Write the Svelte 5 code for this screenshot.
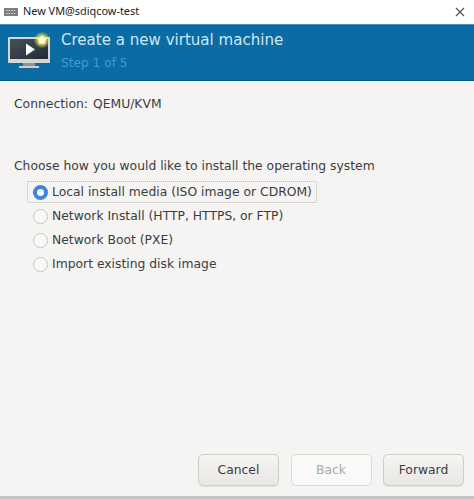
<script>
  let options = [
    "Local install media (ISO image or CDROM)",
    "Network Install (HTTP, HTTPS, or FTP)",
    "Network Boot (PXE)",
    "Import existing disk image",
  ];
  let selected = 0;
</script>

<div class="window">
  <div class="titlebar">
    <svg class="app-icon" width="14" height="8" viewBox="0 0 14 8">
      <rect x="0" y="0" width="14" height="8" fill="#7d7f81" />
      <path d="M2 2.500h10M2 5.500h10" stroke="#d4d4d4" stroke-width="1" stroke-dasharray="1.500 1" />
    </svg>
    <span class="title">New VM@sdiqcow-test</span>
    <svg class="close" width="10" height="10" viewBox="0 0 10 10">
      <path d="M1 1l8 8M9 1l-8 8" stroke="#555" stroke-width="1.200" fill="none" />
    </svg>
  </div>

  <header class="banner">
    <svg class="vm-icon" width="44" height="46" viewBox="0 0 44 46">
      <defs>
        <radialGradient id="glow">
          <stop offset="0.35" stop-color="#fff27a" />
          <stop offset="1" stop-color="#e8e23a" stop-opacity="0" />
        </radialGradient>
        <linearGradient id="screen" x1="0" y1="0" x2="1" y2="1">
          <stop offset="0" stop-color="#46525e" />
          <stop offset="1" stop-color="#232b34" />
        </linearGradient>
      </defs>
      <rect x="0" y="9" width="42" height="26" rx="1" fill="#d5d6d6" />
      <rect x="2" y="11" width="38" height="20" fill="url(#screen)" />
      <rect x="15" y="35" width="12" height="3" fill="#8f9495" />
      <rect x="11" y="38" width="20" height="2" fill="#d9c9c0" />
      <path d="M18 15.500l9 6-9 6z" fill="#fff" />
      <circle cx="34" cy="12" r="8.500" fill="url(#glow)" />
      <path d="M34 7l1.500 3.300 3.500.4-2.600 2.400.7 3.500-3.100-1.800-3.100 1.800.7-3.500-2.600-2.400 3.500-.4z" fill="#fffbe0" />
    </svg>
    <div class="banner-text">
      <h1>Create a new virtual machine</h1>
      <p>Step 1 of 5</p>
    </div>
  </header>

  <main class="content">
    <div class="connection"><span>Connection:</span><span>QEMU/KVM</span></div>

    <div class="prompt">Choose how you would like to install the operating system</div>
    <div class="options">
      {#each options as option, i}
        <label class="option" class:focused={i === selected}>
          <span class="radio" class:checked={i === selected}></span>
          <input type="radio" name="install" value={i} bind:group={selected} />
          <span>{option}</span>
        </label>
      {/each}
    </div>
  </main>

  <footer class="buttons">
    <button>Cancel</button>
    <button disabled>Back</button>
    <button>Forward</button>
  </footer>
  <div class="edge"></div>
</div>

<style>
  :global(body) {
    margin: 0;
    background: #f5f4f2;
  }

  .window {
    width: 474px;
    height: 499px;
    display: flex;
    flex-direction: column;
    overflow: hidden;
    font-family: "DejaVu Sans", sans-serif;
    font-size: 12.350px;
    color: #3a3d3f;
    background: #f5f4f2;
  }

  .titlebar {
    height: 24px;
    flex: none;
    display: flex;
    align-items: center;
    padding: 0 9px 0 4px;
    box-sizing: border-box;
    background: #fff;
    color: #222;
  }

  .app-icon {
    margin-right: 5px;
    margin-top: -1px;
  }

  .title {
    font-family: "Noto Sans", sans-serif;
    font-size: 10.900px;
    line-height: 14px;
    margin-bottom: 3px;
    flex: 1;
  }

  .banner {
    height: 57px;
    flex: none;
    display: flex;
    align-items: flex-start;
    box-sizing: border-box;
    background: #0a6ca3;
    border-top: 1px solid #4d94bd;
    border-bottom: 1px solid #075a8a;
  }

  .vm-icon {
    margin: 3px 0 0 8px;
    flex: none;
  }

  .banner-text {
    margin: 4px 0 0 9px;
  }

  .banner h1 {
    margin: 0;
    font-size: 15.050px;
    font-weight: 400;
    line-height: 22px;
    color: #cfe6f4;
  }

  .banner p {
    margin: 4px 0 0;
    font-size: 12.200px;
    line-height: 16px;
    color: #3f9bd2;
  }

  .content {
    flex: 1;
    padding: 15px 14px 0;
  }

  .connection {
    display: flex;
    gap: 5px;
    line-height: 16px;
  }

  .prompt {
    margin-top: 46px;
    line-height: 16px;
  }

  .options {
    margin-top: 7px;
    margin-left: 13px;
    display: flex;
    flex-direction: column;
    gap: 2px;
  }

  .option {
    height: 22px;
    width: 290px;
    box-sizing: border-box;
    display: flex;
    align-items: center;
    gap: 4px;
    padding-left: 5px;
    border: 1px solid transparent;
    border-radius: 2px;
    white-space: nowrap;
  }

  .option.focused {
    border: 1px dotted #b8b8b4;
  }

  .option input {
    display: none;
  }

  .radio {
    width: 15px;
    height: 15px;
    box-sizing: border-box;
    flex: none;
    border-radius: 50%;
    border: 1px solid #c8c7c3;
    background: #f9f8f7;
  }

  .radio.checked {
    border: 4px solid #3d84dd;
    background: #fff;
  }

  .buttons {
    flex: none;
    display: flex;
    justify-content: flex-end;
    gap: 11.500px;
    padding: 0 10px 10px 0;
  }

  button {
    width: 81px;
    height: 32px;
    box-sizing: border-box;
    font: inherit;
    color: #3a3d3f;
    border: 1px solid #cfcdc9;
    border-radius: 5px;
    background: linear-gradient(#f6f5f4, #e9e7e4);
    box-shadow: 0 1px 1px rgba(0, 0, 0, 0.08);
  }

  button:disabled {
    color: #a6a8a9;
    background: #faf9f8;
    border-color: #dddbd8;
    box-shadow: none;
  }

  .edge {
    height: 3px;
    flex: none;
    background: #c4c3c1;
  }
</style>
